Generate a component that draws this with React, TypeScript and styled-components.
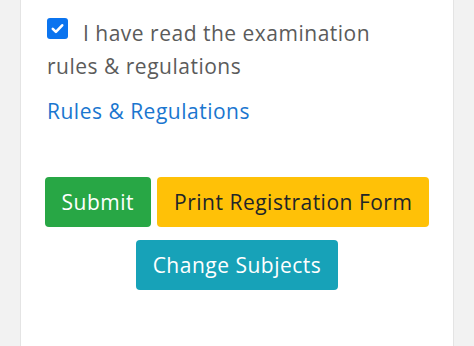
import styled, { createGlobalStyle } from 'styled-components'

const GlobalStyle = createGlobalStyle`
  html, body {
    margin: 0;
    padding: 0;
    background: #f2f2f2;
  }
  body {
    font-family: 'Open Sans', 'Noto Sans', sans-serif;
  }
`

const StyledPage = styled.div`
  /* Grey page with the white card in the middle */
  height: 346px;
  padding: 0 20px;
  box-sizing: border-box;
  overflow: hidden;
`

const StyledCard = styled.div`
  height: 100%;
  background: #ffffff;
  border-left: 1px solid #e4e4e4;
  border-right: 1px solid #e4e4e4;
  padding: 17px 26px 0;
  box-sizing: border-box;
`

const StyledCheckLabel = styled.label`
  display: block;
  max-width: 350px;
  font-size: 21px;
  line-height: 33px;
  color: #5b5b5b;
  letter-spacing: 0.5px;
`

const StyledBox = styled.span`
  display: inline-block;
  width: 21px;
  height: 21px;
  margin-right: 15px;
  vertical-align: 2px;
  border-radius: 3px;
  background: #0b74ef;

  svg {
    display: block;
    margin: 3px;
  }
`

const StyledLink = styled.a`
  display: block;
  margin-top: 12px;
  font-size: 21px;
  line-height: 33px;
  color: #1a76cf;
  text-decoration: none;
  letter-spacing: 0.5px;
`

const StyledButtons = styled.div`
  /* Bootstrap-like row: buttons reach a little past the text column */
  display: flex;
  flex-wrap: wrap;
  justify-content: center;
  gap: 13px 6px;
  margin: 49px -6px 0;
`

type Variant = 'success' | 'warning' | 'info'

const colours: Record<Variant, { bg: string; fg: string }> = {
  success: { bg: '#28a745', fg: '#ffffff' },
  warning: { bg: '#ffc107', fg: '#212529' },
  info: { bg: '#17a2b8', fg: '#ffffff' },
}

const StyledButton = styled.button<{ $variant: Variant }>`
  height: 50px;
  padding: 0 17px;
  font-family: inherit;
  font-size: 21px;
  letter-spacing: 0.5px;
  color: ${(p) => colours[p.$variant].fg};
  background: ${(p) => colours[p.$variant].bg};
  border: none;
  border-radius: 4px;
  cursor: pointer;
`

const CheckMark = () => (
  <svg width="15" height="15" viewBox="0 0 16 16" fill="none">
    <path d="M3 8.4l3.3 3.2L13 4.6" stroke="#fff" strokeWidth="2.8" strokeLinecap="round" strokeLinejoin="round" />
  </svg>
)

const App: React.FC = () => {
  return (
    <>
      <GlobalStyle />
      <StyledPage>
        <StyledCard>
          <StyledCheckLabel>
            <StyledBox>
              <CheckMark />
            </StyledBox>
            I have read the examination rules &amp; regulations
          </StyledCheckLabel>

          <StyledLink href="#">Rules &amp; Regulations</StyledLink>

          <StyledButtons>
            <StyledButton $variant="success">Submit</StyledButton>
            <StyledButton $variant="warning">Print Registration Form</StyledButton>
            <StyledButton $variant="info">Change Subjects</StyledButton>
          </StyledButtons>
        </StyledCard>
      </StyledPage>
    </>
  )
}

export default App
